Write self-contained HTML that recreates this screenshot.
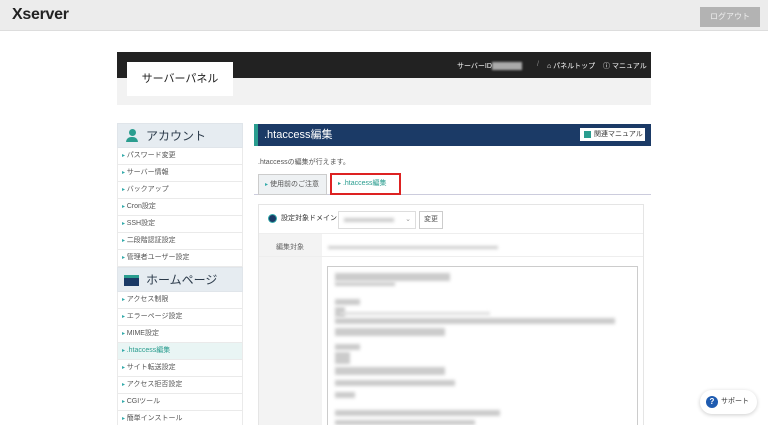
<!DOCTYPE html>
<html><head><meta charset="utf-8"><style>
*{margin:0;padding:0;box-sizing:border-box}
html,body{width:768px;height:425px;overflow:hidden}
body{background:#fff;font-family:"Liberation Sans","Noto Sans CJK JP",sans-serif;position:relative;color:#333}
.a{position:absolute}
.top{left:0;top:0;width:768px;height:31px;background:#ececec;border-bottom:1px solid #ddd}
.logo{left:12px;top:6px;font-size:16px;font-weight:bold;color:#222;letter-spacing:-0.3px}
.logout{left:700px;top:7px;width:60px;height:20px;background:#b3b3b3;color:#eee;font-size:8px;text-align:center;line-height:20px}
.bk{left:117px;top:52px;width:534px;height:26px;background:#222}
.gr{left:117px;top:78px;width:534px;height:27px;background:#f2f2f2}
.card{left:127px;top:62px;width:106px;height:34px;background:#fff;font-size:11px;text-align:center;line-height:34px;color:#222}
.hr{top:61px;font-size:7px;color:#fff}
.side{left:117px;width:126px}
.sh{height:25px;background:#e6ecf1;font-size:12px;color:#2b3a4a;line-height:25px;padding-left:28px;position:relative;border:1px solid #e0e5ea}
.it{height:17px;border:1px solid #eaeaea;border-top:none;font-size:7px;color:#555;line-height:16px;padding-left:4px}
.it:before{content:"▸ ";color:#3aa;font-size:6px}
.it.on{background:#e9f5f4;color:#2a9d8f}
.title{left:254px;top:124px;width:397px;height:22px;background:#1b3a66;border-left:4px solid #2a9d8f;color:#fff;font-size:11px;line-height:22px;padding-left:6px}
.man{left:580px;top:128px;width:65px;height:13px;background:#fff;font-size:7px;color:#333;line-height:13px;padding-left:14px}
.man:before{content:"";position:absolute;left:4px;top:3px;width:7px;height:7px;background:#2a9d8f}
.bar{background:#cbcbcb;filter:blur(1.5px);position:absolute;height:4px}
</style></head><body>
<div class="a top"></div>
<div class="a logo">Xserver</div>
<div class="a logout">ログアウト</div>
<div class="a bk"></div><div class="a gr"></div>
<div class="a card">サーバーパネル</div>
<div class="a hr" style="left:457px">サーバーID</div>
<div class="a" style="left:492px;top:62px;width:30px;height:8px;background:#aaa;filter:blur(1px)"></div>
<div class="a hr" style="left:537px;color:#888">/</div>
<div class="a hr" style="left:547px">⌂ パネルトップ</div>
<div class="a hr" style="left:603px">ⓘ マニュアル</div>

<div class="a side" style="top:123px">
<div class="sh"><span style="position:absolute;left:8px;top:5px;width:12px;height:14px"><span style="position:absolute;left:3px;top:0;width:7px;height:7px;border-radius:50%;background:#2a9d8f"></span><span style="position:absolute;left:0;top:8px;width:12px;height:5px;border-radius:5px 5px 0 0;background:#2a9d8f"></span></span>アカウント</div>
<div class="it">パスワード変更</div><div class="it">サーバー情報</div><div class="it">バックアップ</div><div class="it">Cron設定</div><div class="it">SSH設定</div><div class="it">二段階認証設定</div><div class="it">管理者ユーザー設定</div>
<div class="sh"><span style="position:absolute;left:6px;top:7px;width:15px;height:11px;background:#1b3a66;border-top:3px solid #2a9d8f"></span>ホームページ</div>
<div class="it">アクセス制限</div><div class="it">エラーページ設定</div><div class="it">MIME設定</div><div class="it on">.htaccess編集</div><div class="it">サイト転送設定</div><div class="it">アクセス拒否設定</div><div class="it">CGIツール</div><div class="it">簡単インストール</div>
</div>

<div class="a title">.htaccess編集</div>
<div class="a man">関連マニュアル</div>
<div class="a" style="left:258px;top:157px;font-size:7px;color:#555">.htaccessの編集が行えます。</div>
<div class="a" style="left:254px;top:194px;width:397px;height:1px;background:#ccd"></div>
<div class="a" style="left:258px;top:174px;width:69px;height:21px;background:#eef1f3;border:1px solid #ccc;font-size:7px;line-height:19px;padding-left:6px;color:#555"><span style="color:#3aa;font-size:6px">▸</span> 使用前のご注意</div>
<div class="a" style="left:330px;top:173px;width:71px;height:22px;background:#fff;border:2px solid #d22;font-size:7px;line-height:18px;padding-left:6px;color:#2a9d8f"><span style="font-size:6px">▸</span> .htaccess編集</div>

<div class="a" style="left:258px;top:204px;width:386px;height:230px;border:1px solid #e5e5e5"></div>
<div class="a" style="left:269px;top:215px;width:7px;height:7px;border-radius:50%;background:#1b3a66;box-shadow:0 0 0 1px #3aa"></div>
<div class="a" style="left:281px;top:213px;font-size:7px;color:#333">設定対象ドメイン</div>
<div class="a" style="left:338px;top:211px;width:78px;height:18px;border:1px solid #ddd;font-size:7px;color:#999;line-height:16px;text-align:right;padding-right:4px">⌄</div>
<div class="bar" style="left:344px;top:218px;width:50px"></div>
<div class="a" style="left:419px;top:211px;width:24px;height:18px;border:1px solid #ccc;font-size:7px;line-height:16px;text-align:center;color:#555">変更</div>
<div class="a" style="left:259px;top:233px;width:384px;height:1px;background:#eee"></div>
<div class="a" style="left:259px;top:234px;width:63px;height:200px;background:#f3f3f3"></div>
<div class="a" style="left:259px;top:256px;width:384px;height:1px;background:#eee"></div>
<div class="a" style="left:276px;top:242px;font-size:7px;color:#666">編集対象</div>
<div class="bar" style="left:328px;top:246px;width:170px;height:3px"></div>
<div class="a" style="left:327px;top:266px;width:311px;height:170px;border:1px solid #ccc"></div>
<div class="bar" style="left:335px;top:273px;width:115px;height:8px"></div>
<div class="bar" style="left:335px;top:282px;width:60px;height:4px"></div>
<div class="bar" style="left:335px;top:299px;width:25px;height:6px"></div>
<div class="bar" style="left:335px;top:307px;width:10px;height:10px"></div>
<div class="bar" style="left:340px;top:312px;width:150px;height:3px;background:#ddd"></div>
<div class="bar" style="left:335px;top:318px;width:280px;height:6px"></div>
<div class="bar" style="left:335px;top:328px;width:110px;height:8px"></div>
<div class="bar" style="left:335px;top:344px;width:25px;height:6px"></div>
<div class="bar" style="left:335px;top:352px;width:15px;height:12px"></div>
<div class="bar" style="left:335px;top:367px;width:110px;height:8px"></div>
<div class="bar" style="left:335px;top:380px;width:120px;height:6px"></div>
<div class="bar" style="left:335px;top:392px;width:20px;height:6px"></div>
<div class="bar" style="left:335px;top:410px;width:165px;height:6px"></div>
<div class="bar" style="left:335px;top:420px;width:140px;height:5px"></div>

<div class="a" style="left:700px;top:390px;width:57px;height:24px;border-radius:12px;background:#fff;box-shadow:0 1px 4px rgba(0,0,0,.2);font-size:7px;line-height:24px;padding-left:21px;color:#333">サポート</div>
<div class="a" style="left:706px;top:396px;width:12px;height:12px;border-radius:50%;background:#1e5bb0;color:#fff;font-size:8px;font-weight:bold;text-align:center;line-height:12px">?</div>
</body></html>
